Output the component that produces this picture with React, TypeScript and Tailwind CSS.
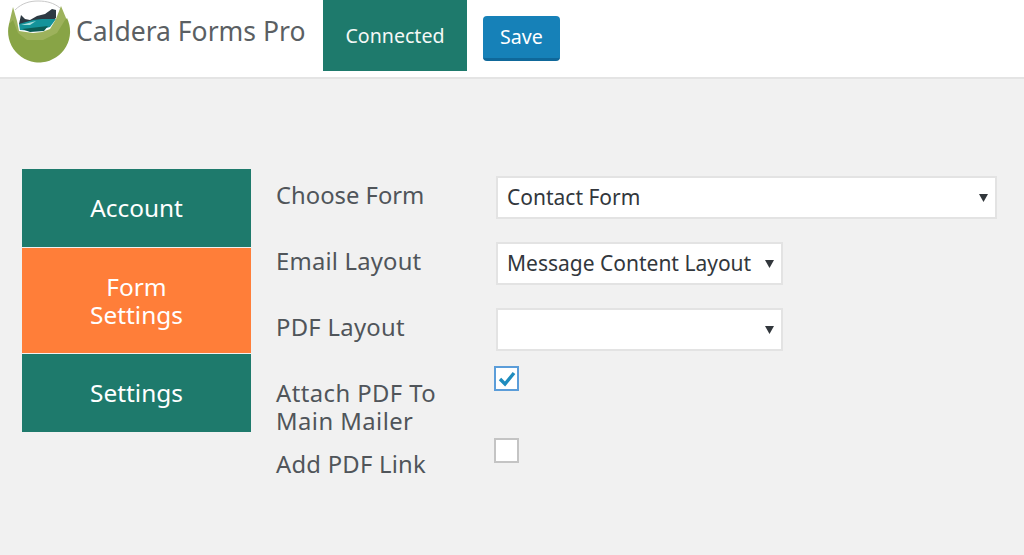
const font = { fontFamily: '"Noto Sans", sans-serif' };

function Logo() {
  return (
    <svg width="66" height="64" viewBox="6 0 66 64" className="shrink-0">
      <path d="M15 10 C22 3 30 1 38 1 C47 1 54 3 60 8" fill="#fff" stroke="#c9c9c9" strokeWidth="1" />
      <path d="M19 24 L21 15 L25 19 L30 20 L37 16 L45 14 L52 9 L56 10 L56 18 L48 24 L30 27 Z" fill="#2d3942" />
      <path d="M19 24 L33 20 L42 19 L56 19 L50 27 L36 31 L20 30 Z" fill="#14939a" />
      <path d="M21 25 L36 21 L30 25 Z" fill="#a9dedb" />
      <path d="M22 29 L48 26 L44 31 L30 32 Z" fill="#0c5c55" />
      <path d="M13 7 L17 21 L19 31 L33 33 L42 32 L50 29 L56 19 L61 6 L66 18 L66 42 L12 42 L9 24 Z" fill="#9db25c" />
      <path d="M9 24 L13 20 L18 33 L27 40 L43 40 L57 33 L65 20 L67 18 A31 31 0 1 1 9 24 Z" fill="#88a446" />
    </svg>
  );
}

function Arrow() {
  return (
    <svg width="9" height="8" viewBox="0 0 9 8" className="shrink-0">
      <path d="M0 0 H9 L4.5 8 Z" fill="#32373c" />
    </svg>
  );
}

function Select({ value, width }: { value?: string; width: string }) {
  return (
    <div className={`${width} h-[43px] flex items-center justify-between bg-white border-2 border-[#e3e3e3] pl-[9px] pr-[7px] text-[21px] text-[#32373c]`}>
      <span className="whitespace-nowrap -mt-[2px]">{value}</span>
      <Arrow />
    </div>
  );
}

export default function App() {
  return (
    <div style={font} className="w-[1024px] h-[555px] overflow-hidden bg-[#f1f1f1] flex flex-col">
      <header className="h-[79px] shrink-0 bg-white border-b-2 border-[#e4e4e4] flex items-start">
        <div className="pl-[6px] w-[76px]"><Logo /></div>
        <div className="w-[247px] pt-[12px] text-[26.5px] leading-[38px] text-[#5b5f63] whitespace-nowrap">Caldera Forms Pro</div>
        <div className="w-[144px] h-[71px] bg-[#1e7a6c] text-[#f4f8f6] text-[19.6px] flex items-center justify-center">Connected</div>
        <button className="ml-[16px] mt-[16px] w-[77px] h-[45px] rounded-[4px] bg-[#1681b8] border-b-[3px] border-[#0f689a] text-white text-[19.6px] flex items-center justify-center">Save</button>
      </header>
      <main className="flex pl-[22px] pt-[90px]">
        <nav className="w-[229px] flex flex-col gap-px text-white text-[24.4px] leading-[28px] text-center shrink-0">
          <div className="h-[78px] bg-[#1e7a6c] flex items-center justify-center">Account</div>
          <div className="h-[105px] bg-[#ff7e39] flex items-center justify-center">Form<br />Settings</div>
          <div className="h-[78px] bg-[#1e7a6c] flex items-center justify-center">Settings</div>
        </nav>
        <div className="ml-[25px] w-[721px] text-[23.8px] leading-[28px] text-[#50555a]">
          <div className="flex h-[66px] pt-[7px]">
            <div className="w-[220px] pt-[5px]">Choose Form</div>
            <Select value="Contact Form" width="w-[501px]" />
          </div>
          <div className="flex h-[66px] pt-[7px]">
            <div className="w-[220px] pt-[5px] tracking-[0.2px]">Email Layout</div>
            <Select value="Message Content Layout" width="w-[287px]" />
          </div>
          <div className="flex h-[58px] pt-[7px]">
            <div className="w-[220px] pt-[5px] tracking-[0.3px]">PDF Layout</div>
            <Select width="w-[287px]" />
          </div>
          <div className="flex h-[72px] pt-[7px]">
            <div className="w-[219px] pt-[13px] tracking-[0.45px]">Attach PDF To<br />Main Mailer</div>
            <div className="w-[25px] h-[25px] -ml-px bg-white border-2 border-[#5b9dd9] flex items-center justify-center">
              <svg width="20" height="18" viewBox="0 0 20 18">
                <path d="M3 9 L8 14 L17 3" fill="none" stroke="#1e8cbe" strokeWidth="3.4" />
              </svg>
            </div>
          </div>
          <div className="flex pt-[7px]">
            <div className="w-[219px] pt-[12px] tracking-[0.25px]">Add PDF Link</div>
            <div className="w-[25px] h-[25px] -ml-px bg-white border-2 border-[#c4c4c4]"></div>
          </div>
        </div>
      </main>
    </div>
  );
}
